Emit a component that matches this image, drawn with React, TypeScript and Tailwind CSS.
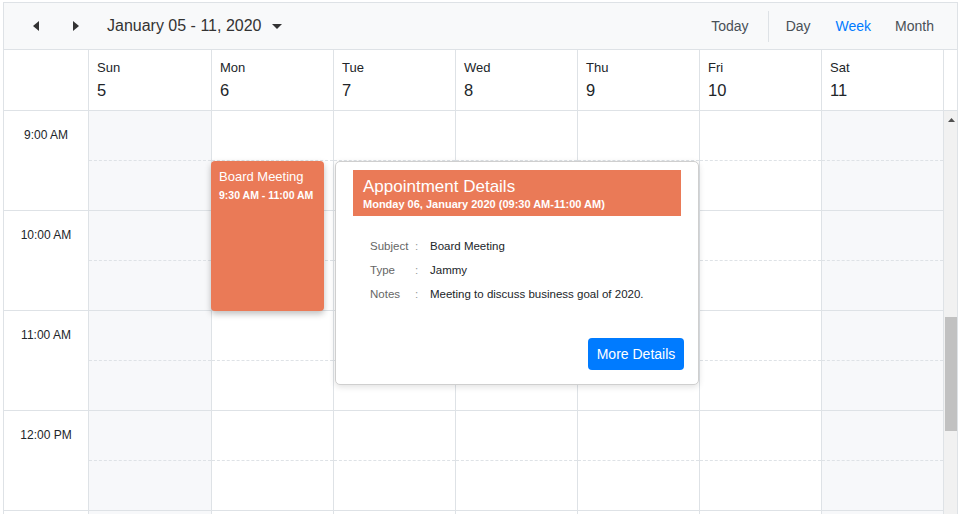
import React from "react";

const days = [
  { d: "Sun", n: "5", w: "w-[123px]", off: true },
  { d: "Mon", n: "6", w: "w-[122px]", off: false },
  { d: "Tue", n: "7", w: "w-[122px]", off: false },
  { d: "Wed", n: "8", w: "w-[122px]", off: false },
  { d: "Thu", n: "9", w: "w-[122px]", off: false },
  { d: "Fri", n: "10", w: "w-[122px]", off: false },
  { d: "Sat", n: "11", w: "w-[122px]", off: true },
];

const hours = ["9:00 AM", "10:00 AM", "11:00 AM", "12:00 PM", ""];

export default function App() {
  return (
    <div className="w-[960px] h-[514px] bg-white overflow-hidden pt-[2px] pl-[3px] pr-[2px] font-['Liberation_Sans',Arial,sans-serif]">
      <div className="h-[530px] border border-[#dee2e6] flex flex-col">
        {/* Toolbar */}
        <div className="h-[47px] shrink-0 bg-[#f8f9fa] border-b border-[#dee2e6] flex items-center pl-[12px] pr-[23px]">
          <button className="w-10 h-8 flex items-center justify-center">
            <svg width="6" height="10" viewBox="0 0 6 10"><path d="M6 0 L0 5 L6 10 Z" fill="#333" /></svg>
          </button>
          <button className="w-10 h-8 flex items-center justify-center">
            <svg width="6" height="10" viewBox="0 0 6 10"><path d="M0 0 L6 5 L0 10 Z" fill="#333" /></svg>
          </button>
          <span className="ml-[11px] text-[16px] text-[#333]">January 05 - 11, 2020</span>
          <svg className="ml-[11px] mt-[1px]" width="10" height="5" viewBox="0 0 10 5"><path d="M0 0 L10 0 L5 5 Z" fill="#333" /></svg>
          <div className="flex-1" />
          <span className="text-[14px] text-[#495057]">Today</span>
          <div className="ml-[19px] w-px h-[31px] bg-[#dee2e6]" />
          <span className="ml-[17px] text-[14px] text-[#495057]">Day</span>
          <span className="ml-[25px] text-[14px] text-[#007bff]">Week</span>
          <span className="ml-[24px] text-[14px] text-[#495057]">Month</span>
        </div>

        {/* Header row */}
        <div className="h-[61px] shrink-0 border-b border-[#dee2e6] flex">
          <div className="w-[85px] border-r border-[#dee2e6]" />
          {days.map((d) => (
            <div key={d.d} className={`${d.w} border-r border-[#dee2e6] pl-[8px] pt-[10px] text-[#212529]`}>
              <div className="text-[13px] leading-4">{d.d}</div>
              <div className="mt-[4px] text-[16.5px] leading-[20px]">{d.n}</div>
            </div>
          ))}
          <div className="flex-1" />
        </div>

        {/* Body */}
        <div className="relative flex flex-1 overflow-hidden">
          <div className="w-[85px] shrink-0 border-r border-[#dee2e6]">
            {hours.map((h, i) => (
              <div key={i} className="h-[100px] border-b border-[#dee2e6] pt-[17px] text-center text-[12px] leading-[14px] text-[#212529]">
                {h}
              </div>
            ))}
          </div>
          {days.map((d) => (
            <div key={d.d} className={`${d.w} shrink-0 border-r border-[#dee2e6] ${d.off ? "bg-[#f7f8fa]" : "bg-white"}`}>
              {hours.map((h, i) => (
                <div key={i} className="h-[100px]">
                  <div className="h-[50px] border-b border-dashed border-[#dee2e6]" />
                  <div className="h-[50px] border-b border-[#dee2e6]" />
                </div>
              ))}
            </div>
          ))}
          {/* Scrollbar */}
          <div className="relative w-[15px] shrink-0 bg-[#f1f1f1]">
            <svg className="absolute left-[4px] top-[7px]" width="7" height="4" viewBox="0 0 7 4"><path d="M0 4 L3.5 0 L7 4 Z" fill="#505050" /></svg>
            <div className="absolute left-[1px] top-[206px] w-[13px] h-[114px] bg-[#c1c1c1]" />
          </div>

          {/* Event */}
          <div className="absolute left-[207px] top-[50px] w-[113px] h-[150px] rounded-[4px] bg-[#ea7a57] shadow-[0_3px_6px_rgba(0,0,0,0.25)] px-[8px] pt-[8px] text-white">
            <div className="text-[13px] leading-[15px]">Board Meeting</div>
            <div className="mt-[5px] text-[10.5px] leading-[13px] font-bold">9:30 AM - 11:00 AM</div>
          </div>

          {/* Popup */}
          <div className="absolute left-[331px] top-[50px] w-[364px] h-[224px] rounded-[5px] border border-[#cfcfcf] bg-white shadow-[0_2px_6px_rgba(0,0,0,0.12)] pl-[17px] pr-[17px] pt-[8px]">
            <div className="h-[46px] bg-[#ea7a57] pl-[10px] pt-[7px] text-white">
              <div className="text-[17px] leading-[20px]">Appointment Details</div>
              <div className="mt-[1px] text-[11px] leading-[13px] font-bold">Monday 06, January 2020 (09:30 AM-11:00 AM)</div>
            </div>
            <div className="mt-[19px] pl-[17px] text-[11.5px]">
              {[
                ["Subject", "Board Meeting"],
                ["Type", "Jammy"],
                ["Notes", "Meeting to discuss business goal of 2020."],
              ].map(([k, v]) => (
                <div key={k} className="h-6 flex items-center">
                  <span className="w-[45px] text-[#666]">{k}</span>
                  <span className="w-[15px] text-[#999]">:</span>
                  <span className="text-[#212529]">{v}</span>
                </div>
              ))}
            </div>
            <div className="mt-[31px] flex justify-end">
              <button className="w-[96px] h-[32px] -mr-[3px] rounded-[4px] bg-[#007bff] text-white text-[14px]">More Details</button>
            </div>
          </div>
        </div>
      </div>
    </div>
  );
}
